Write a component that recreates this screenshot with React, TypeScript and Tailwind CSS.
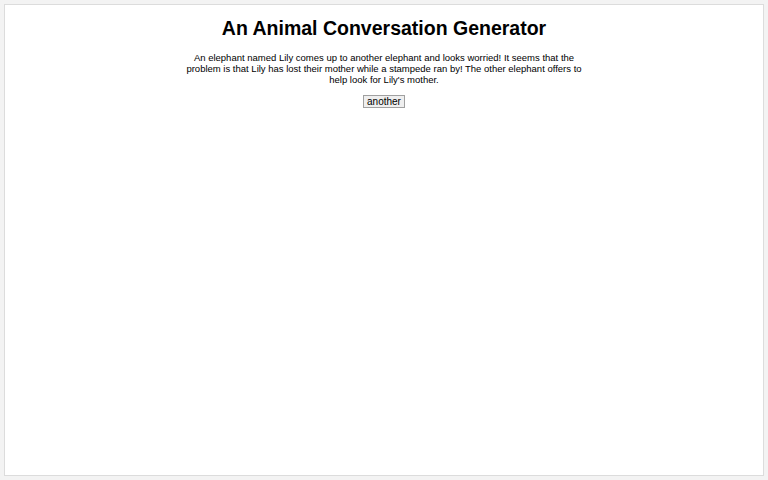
import React from 'react';

const story =
  "An elephant named Lily comes up to another elephant and looks worried! It seems that the problem is that Lily has lost their mother while a stampede ran by! The other elephant offers to help look for Lily's mother.";

const App: React.FC = () => {
  return (
    <div className="w-full h-screen bg-[#f3f3f3] p-[4px] font-['Liberation_Sans',Arial,sans-serif] text-black">
      <div className="h-full bg-white border border-[#dcdcdc] flex flex-col items-center">
        <h1 className="mt-[10px] text-[19.5px] leading-[26px] font-bold">An Animal Conversation Generator</h1>
        <p className="mt-[11px] w-[400px] text-center text-[9.5px] leading-[11px]">{story}</p>
        <button className="mt-[10px] px-[3px] h-[13px] text-[10px] leading-[11px] bg-[#efefef] border border-[#a0a0a0]">
          another
        </button>
      </div>
    </div>
  );
};

export default App;
